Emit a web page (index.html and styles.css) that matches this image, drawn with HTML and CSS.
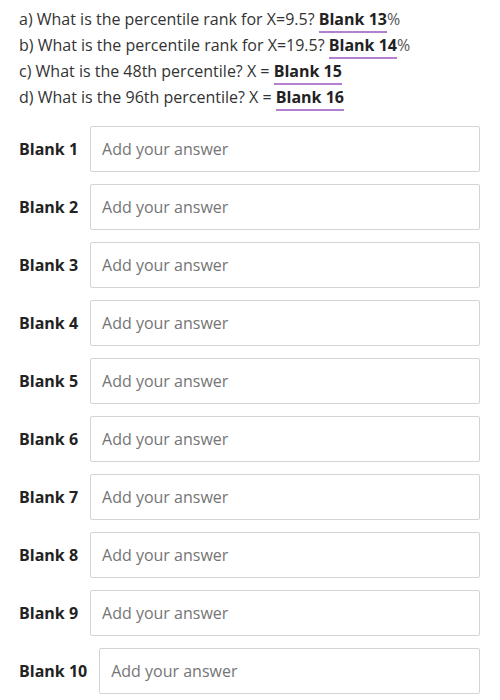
FILE: index.html
```html
<!DOCTYPE html>
<html>
<head>
<meta charset="utf-8">
<link rel="stylesheet" href="styles.css">
</head>
<body>
<div class="page">
  <div class="questions">
    <div class="q">a) What is the percentile rank for X=9.5? <span class="blank">Blank 13</span><span class="pct">%</span></div>
    <div class="q">b) What is the percentile rank for X=19.5? <span class="blank">Blank 14</span><span class="pct">%</span></div>
    <div class="q">c) What is the 48th percentile? X = <span class="blank">Blank 15</span></div>
    <div class="q">d) What is the 96th percentile? X = <span class="blank">Blank 16</span></div>
  </div>
  <div class="answers">
    <div class="row"><span class="label">Blank 1</span><input class="field" type="text" placeholder="Add your answer"></div>
    <div class="row"><span class="label">Blank 2</span><input class="field" type="text" placeholder="Add your answer"></div>
    <div class="row"><span class="label">Blank 3</span><input class="field" type="text" placeholder="Add your answer"></div>
    <div class="row"><span class="label">Blank 4</span><input class="field" type="text" placeholder="Add your answer"></div>
    <div class="row"><span class="label">Blank 5</span><input class="field" type="text" placeholder="Add your answer"></div>
    <div class="row"><span class="label">Blank 6</span><input class="field" type="text" placeholder="Add your answer"></div>
    <div class="row"><span class="label">Blank 7</span><input class="field" type="text" placeholder="Add your answer"></div>
    <div class="row"><span class="label">Blank 8</span><input class="field" type="text" placeholder="Add your answer"></div>
    <div class="row"><span class="label">Blank 9</span><input class="field" type="text" placeholder="Add your answer"></div>
    <div class="row"><span class="label">Blank 10</span><input class="field" type="text" placeholder="Add your answer"></div>
  </div>
</div>
</body>
</html>
```
FILE: styles.css
```css
html, body {
  margin: 0;
  padding: 0;
  background: #fff;
}
.page {
  font-family: "Open Sans", "Liberation Sans", sans-serif;
  font-size: 16px;
  color: #333;
  padding: 6px 20px 0 19px;
}
.q {
  line-height: 26px;
  white-space: nowrap;
}
.blank {
  font-weight: 700;
  color: #222;
  padding-bottom: 1px;
  border-bottom: 2px solid #b47fcf;
}
.pct {
  color: #555;
}
.answers {
  margin-top: 16px;
  display: flex;
  flex-direction: column;
  gap: 12px;
}
.row {
  display: flex;
  align-items: center;
  gap: 12px;
}
.label {
  font-weight: 700;
  color: #222;
  white-space: nowrap;
}
.field {
  flex: 1;
  min-width: 0;
  height: 46px;
  box-sizing: border-box;
  border: 1px solid #d4d4d4;
  border-radius: 2px;
  padding: 0 11px;
  font-family: "Open Sans", "Liberation Sans", sans-serif;
  font-size: 16px;
  color: #333;
  background: #fff;
  outline: none;
}
.field::placeholder {
  color: #757575;
}
```
